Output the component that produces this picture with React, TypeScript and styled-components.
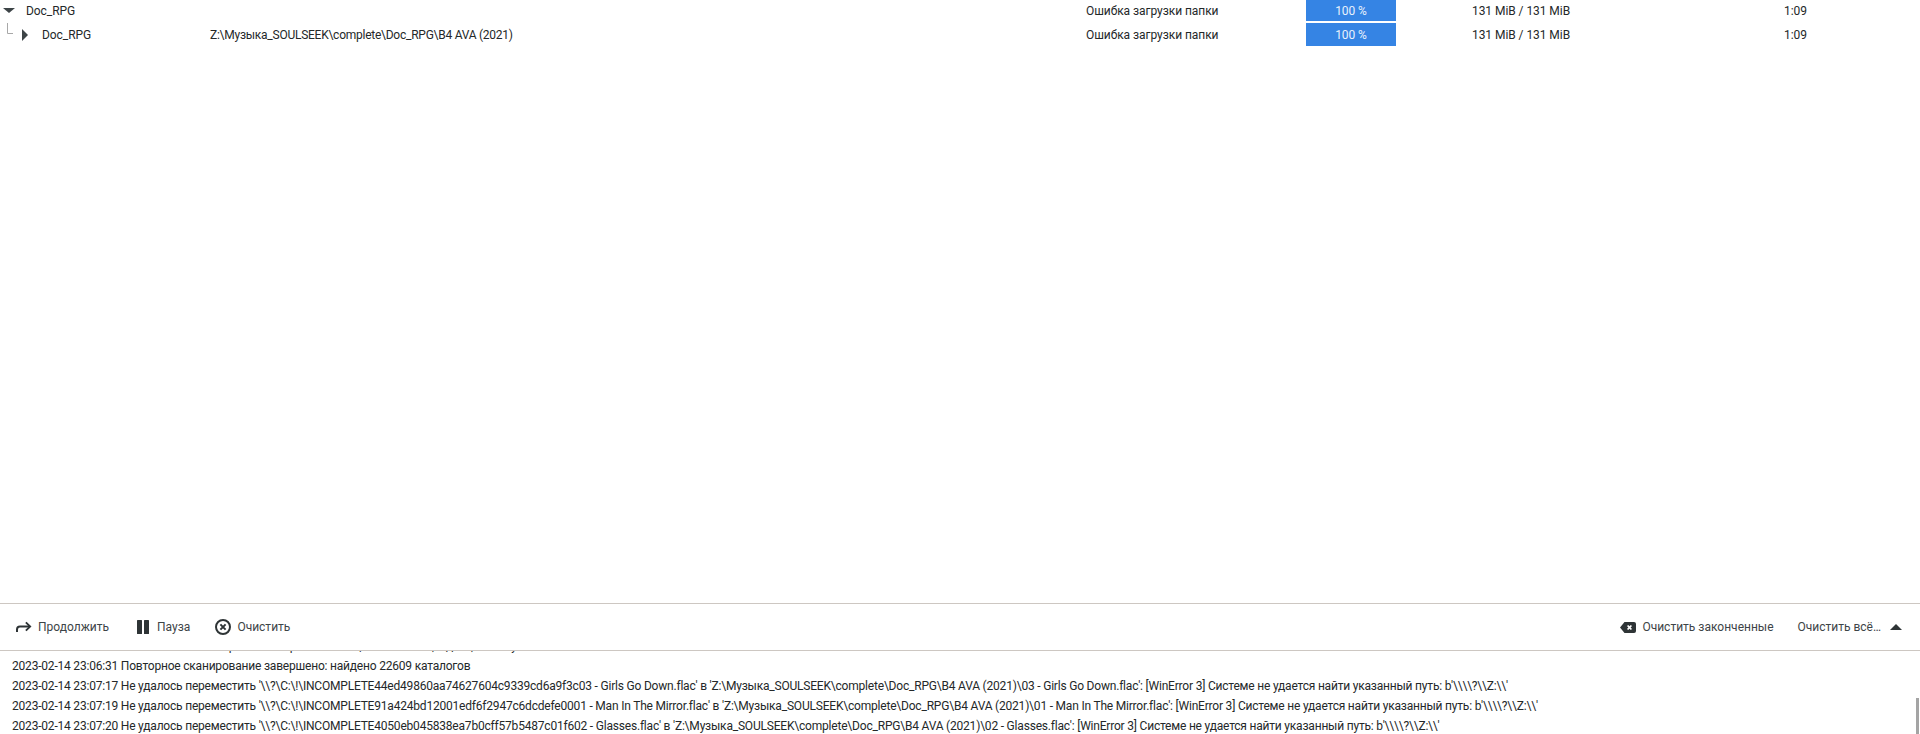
import React from "react";
import styled, { createGlobalStyle } from "styled-components";

const Global = createGlobalStyle`
  html, body { margin: 0; padding: 0; background: #fff; height: 100%; overflow: hidden; }
  #root { height: 100%; }
`;
const Page = styled.div`
  height: 734px; display: flex; flex-direction: column;
  font-family: Roboto, "Noto Sans", sans-serif; font-size: 12px; color: #242829;
`;
const List = styled.div`flex: 1; letter-spacing: -0.06px;`;
const Row = styled.div<{ $height: number }>`
  display: grid; grid-template-columns: 210px 876px 220px 166px 312px 1fr;
  height: ${p => p.$height}px; margin-bottom: 2px; align-items: center; white-space: nowrap;
`;
const NameCell = styled.div`display: flex; align-items: center; height: 100%;`;
const PathCell = styled.div`letter-spacing: -0.25px;`;
const Bar = styled.div<{ $height: number }>`
  width: 90px; height: ${p => p.$height}px; background: #3584e4; color: #e8f1fc; display: flex;
  align-items: center; justify-content: center;
`;
const Elbow = styled.svg`align-self: flex-start; margin-left: 7px; margin-right: 9px; flex: none;`;
const TopExpander = styled.svg`margin-left: 3px; margin-right: 11px; flex: none;`;
const SubExpander = styled.svg`margin-right: 14px; flex: none;`;
const Toolbar = styled.div`
  height: 46px; border-top: 1px solid #cdc7c2; border-bottom: 1px solid #cdc7c2;
  display: flex; align-items: center; padding: 0 18px 0 16px; color: #3d4447; flex: none;
`;
const ToolButton = styled.div<{ $iconGap: number; $after: number }>`
  display: flex; align-items: center; gap: ${p => p.$iconGap}px; margin-right: ${p => p.$after}px;
`;
const Spacer = styled.div`flex: 1;`;
const Log = styled.div`
  height: 83px; flex: none; position: relative; overflow: hidden; padding-left: 12px;
  letter-spacing: -0.2px;
`;
const LogLine = styled.div`height: 20px; line-height: 20px; white-space: nowrap;`;
const Clipped = styled(LogLine)`margin-top: -15px;`;
const Thumb = styled.div`
  position: absolute; right: 1px; bottom: 0; width: 3px; height: 36px; background: #a4a4a4;
`;

const ResumeIcon = () => (
  <svg width="16" height="12" viewBox="0 0 16 12">
    <path d="M1 11V8.5C1 6.6 2.4 5.5 4 5.5H13.5" fill="none" stroke="#2e3436" strokeWidth="2" />
    <path d="M10.5 0.8L15.5 5.5L10.5 10.2L9.2 8.9L12.8 5.5L9.2 2.1Z" fill="#2e3436" />
  </svg>
);
const PauseIcon = () => (
  <svg width="12" height="14" viewBox="0 0 12 14">
    <rect x="0" y="0" width="5" height="14" rx="0.5" fill="#2e3436" />
    <rect x="7" y="0" width="5" height="14" rx="0.5" fill="#2e3436" />
  </svg>
);
const ClearIcon = () => (
  <svg width="16" height="16" viewBox="0 0 16 16">
    <circle cx="8" cy="8" r="7" fill="none" stroke="#2e3436" strokeWidth="2" />
    <path d="M5.4 5.4L10.6 10.6M10.6 5.4L5.4 10.6" fill="none" stroke="#2e3436" strokeWidth="2" />
  </svg>
);
const BackspaceIcon = () => (
  <svg width="16" height="11" viewBox="0 0 16 11">
    <path d="M4.5 0H14a2 2 0 0 1 2 2V9a2 2 0 0 1-2 2H4.5L0 5.5Z" fill="#2e3436" />
    <path d="M7.6 3.5L11.4 7.5M11.4 3.5L7.6 7.5" fill="none" stroke="#fff" strokeWidth="1.8" />
  </svg>
);
const UpIcon = () => (
  <svg width="12" height="6" viewBox="0 0 12 6"><path d="M0 6H12L6 0Z" fill="#2e3436" /></svg>
);

const lines = [
  "2023-02-14 23:07:17 Не удалось переместить '\\\\?\\C:\\!\\INCOMPLETE44ed49860aa74627604c9339cd6a9f3c03 - Girls Go Down.flac' в 'Z:\\Музыка_SOULSEEK\\complete\\Doc_RPG\\B4 AVA (2021)\\03 - Girls Go Down.flac': [WinError 3] Системе не удается найти указанный путь: b'\\\\\\\\?\\\\Z:\\\\'",
  "2023-02-14 23:07:19 Не удалось переместить '\\\\?\\C:\\!\\INCOMPLETE91a424bd12001edf6f2947c6dcdefe0001 - Man In The Mirror.flac' в 'Z:\\Музыка_SOULSEEK\\complete\\Doc_RPG\\B4 AVA (2021)\\01 - Man In The Mirror.flac': [WinError 3] Системе не удается найти указанный путь: b'\\\\\\\\?\\\\Z:\\\\'",
  "2023-02-14 23:07:20 Не удалось переместить '\\\\?\\C:\\!\\INCOMPLETE4050eb045838ea7b0cff57b5487c01f602 - Glasses.flac' в 'Z:\\Музыка_SOULSEEK\\complete\\Doc_RPG\\B4 AVA (2021)\\02 - Glasses.flac': [WinError 3] Системе не удается найти указанный путь: b'\\\\\\\\?\\\\Z:\\\\'",
];

export default function App() {
  return (
    <Page>
      <Global />
      <List>
        <Row $height={21}>
          <NameCell>
            <TopExpander width="12" height="5" viewBox="0 0 12 5"><path d="M0 0H12L6 5Z" fill="#3d4447" /></TopExpander>
            <span>Doc_RPG</span>
          </NameCell>
          <div />
          <div>Ошибка загрузки папки</div>
          <Bar $height={21}>100 %</Bar>
          <div>131 MiB / 131 MiB</div>
          <div>1:09</div>
        </Row>
        <Row $height={23}>
          <NameCell>
            <Elbow width="6" height="11" viewBox="0 0 6 11"><path d="M0.5 0V10.5H6" fill="none" stroke="#a8a8a8" /></Elbow>
            <SubExpander width="6" height="12" viewBox="0 0 6 12"><path d="M0 0V12L6 6Z" fill="#3d4447" /></SubExpander>
            <span>Doc_RPG</span>
          </NameCell>
          <PathCell>Z:\Музыка_SOULSEEK\complete\Doc_RPG\B4 AVA (2021)</PathCell>
          <div>Ошибка загрузки папки</div>
          <Bar $height={23}>100 %</Bar>
          <div>131 MiB / 131 MiB</div>
          <div>1:09</div>
        </Row>
      </List>
      <Toolbar>
        <ToolButton $iconGap={6} $after={28}><ResumeIcon /><span>Продолжить</span></ToolButton>
        <ToolButton $iconGap={8} $after={25}><PauseIcon /><span>Пауза</span></ToolButton>
        <ToolButton $iconGap={6} $after={0}><ClearIcon /><span>Очистить</span></ToolButton>
        <Spacer />
        <ToolButton $iconGap={6} $after={24}><BackspaceIcon /><span>Очистить законченные</span></ToolButton>
        <ToolButton $iconGap={9} $after={0}><span>Очистить всё…</span><UpIcon /></ToolButton>
      </Toolbar>
      <Log>
        <Clipped>2023-02-14 23:06:10 Выполняется повторное сканирование общих каталогов, ждите, пожалуйста</Clipped>
        <LogLine>2023-02-14 23:06:31 Повторное сканирование завершено: найдено 22609 каталогов</LogLine>
        {lines.map(l => <LogLine key={l}>{l}</LogLine>)}
        <Thumb />
      </Log>
    </Page>
  );
}
